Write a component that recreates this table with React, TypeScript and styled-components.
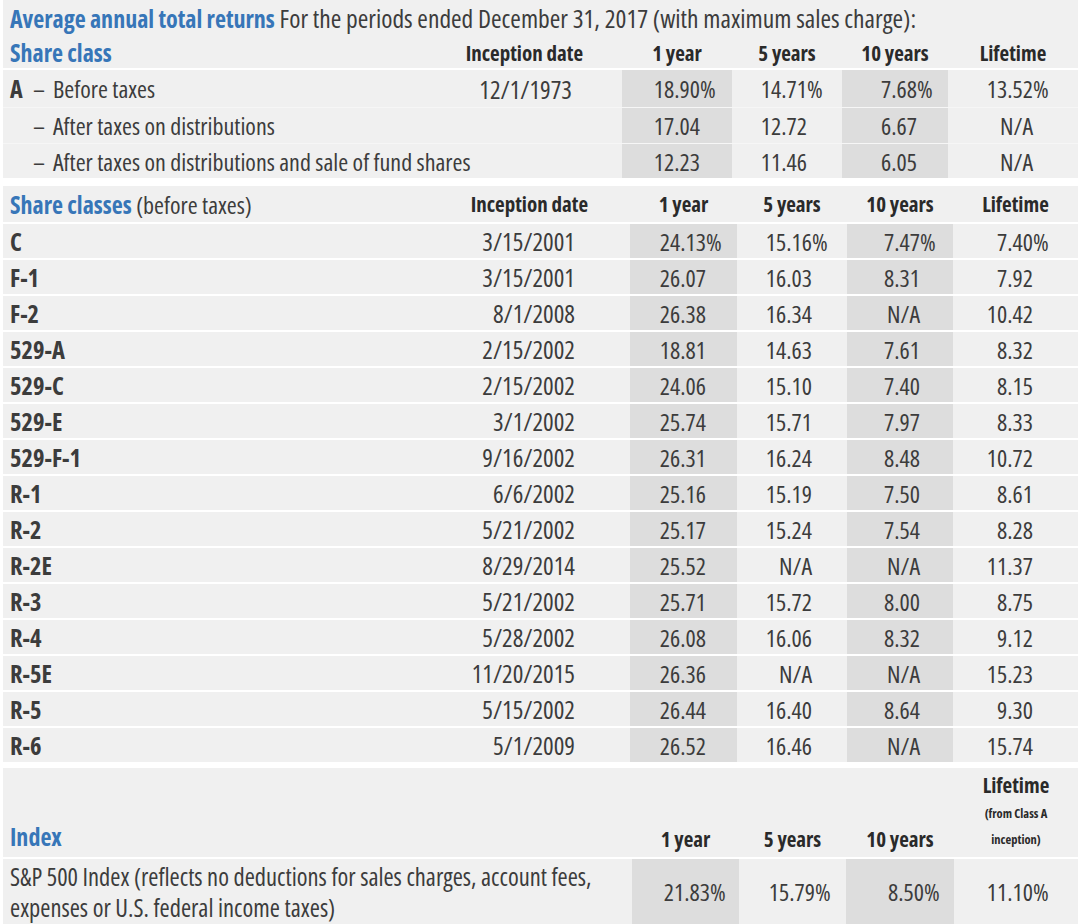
import React from 'react'
import styled, { createGlobalStyle } from 'styled-components'

const GlobalStyle = createGlobalStyle`
  *, *::before, *::after {
    box-sizing: border-box;
  }
  html, body {
    margin: 0;
    padding: 0;
    background: #ffffff;
  }
  body {
    font-family: "Open Sans", "DejaVu Sans Condensed", sans-serif;
    font-stretch: 80%;
    color: #3c3c3c;
  }
`

const BLUE = '#3776b8'

const Page = styled.div`
  width: 1075px;
  margin-left: 3px;
  display: flex;
  flex-direction: column;
`

const Section = styled.section<{ $gap?: number }>`
  background: #f0f0f0;
  display: flex;
  flex-direction: column;
  margin-bottom: ${(p) => p.$gap ?? 0}px;
`

const Title = styled.div`
  height: 36px;
  display: flex;
  align-items: center;
  padding-left: 7px;
  font-size: 25.5px;
  white-space: nowrap;
`

const Blue = styled.span<{ $size?: number }>`
  color: ${BLUE};
  font-weight: 700;
  font-size: ${(p) => (p.$size ? `${p.$size}px` : 'inherit')};
`

const Row = styled.div<{ $cols: string; $h: number; $line?: 'white' | 'soft' | 'none' }>`
  display: grid;
  grid-template-columns: ${(p) => p.$cols};
  height: ${(p) => p.$h}px;
  border-top: ${(p) =>
    p.$line === 'white' ? '2px solid #ffffff' : p.$line === 'soft' ? '1px solid #f6f6f6' : 'none'};
`

const LabelCell = styled.div<{ $bold?: boolean; $align?: 'center' | 'end' }>`
  display: flex;
  align-items: ${(p) => (p.$align === 'end' ? 'flex-end' : 'center')};
  padding-left: 7px;
  padding-bottom: ${(p) => (p.$align === 'end' ? '4px' : '0')};
  font-size: ${(p) => (p.$bold ? '24.5px' : '24px')};
  font-weight: ${(p) => (p.$bold ? 700 : 400)};
  white-space: nowrap;
`

const Letter = styled.span`
  flex-shrink: 0;
  width: 23px;
  font-weight: 700;
`

const Dash = styled.span`
  flex-shrink: 0;
  width: 20px;
`

const WrapLabel = styled.div`
  display: flex;
  align-items: center;
  padding-left: 7px;
  padding-right: 10px;
  font-size: 24.5px;
  line-height: 31px;
`

const HeadCell = styled.div<{ $pad?: number; $align?: 'center' | 'end' }>`
  display: flex;
  align-items: ${(p) => (p.$align === 'end' ? 'flex-end' : 'center')};
  justify-content: ${(p) => (p.$pad !== undefined ? 'flex-end' : 'center')};
  padding-right: ${(p) => p.$pad ?? 0}px;
  padding-bottom: ${(p) => (p.$align === 'end' ? '4px' : '0')};
  font-size: 21px;
  font-weight: 700;
  color: #2a2a2a;
  white-space: nowrap;
`

const StackHead = styled.div`
  display: flex;
  flex-direction: column;
  align-items: center;
  justify-content: flex-end;
  padding-bottom: 4px;
  font-weight: 700;
  color: #2a2a2a;
  line-height: 1.2;
`

const StackMain = styled.span`
  font-size: 21px;
  margin-bottom: 3px;
`

const StackSmall = styled.span`
  font-size: 12.5px;
  line-height: 26px;
`

const DateCell = styled.div<{ $pad: number }>`
  display: flex;
  align-items: center;
  justify-content: flex-end;
  padding-right: ${(p) => p.$pad}px;
  font-size: 25px;
`

const ValueCell = styled.div<{ $shade?: boolean; $pad: number }>`
  display: flex;
  align-items: center;
  justify-content: flex-end;
  padding-right: ${(p) => p.$pad}px;
  background: ${(p) => (p.$shade ? '#dddddd' : 'transparent')};
  font-size: 24px;
  white-space: nowrap;
`

const Pct = styled.span`
  display: inline-block;
  width: 0;
  overflow: visible;
`

type Cfg = { cols: string; pads: number[]; datePad: number; headPad: number }

const top: Cfg = {
  cols: '452px 167px 110px 110px 106px 1fr',
  pads: [32, 35, 31, 45],
  datePad: 50,
  headPad: 39,
}

const mid: Cfg = {
  cols: '455px 172px 107px 110px 106px 1fr',
  pads: [31, 35, 33, 45],
  datePad: 55,
  headPad: 42,
}

const bottomCols = '629px 107px 107px 108px 1fr'
const bottomPads = [29, 31, 30, 45]

const Value = ({ v, shade, pad }: { v: string; shade?: boolean; pad: number }) => {
  const pct = v.endsWith('%')
  return (
    <ValueCell $shade={shade} $pad={pad}>
      {pct ? v.slice(0, -1) : v}
      <Pct>{pct ? '%' : ''}</Pct>
    </ValueCell>
  )
}

const Values = ({ vals, pads }: { vals: string[]; pads: number[] }) => (
  <>
    {vals.map((v, i) => (
      <Value key={i} v={v} pad={pads[i]} shade={i === 0 || i === 2} />
    ))}
  </>
)

const YearHeads = () => (
  <>
    <HeadCell>1 year</HeadCell>
    <HeadCell>5 years</HeadCell>
    <HeadCell>10 years</HeadCell>
    <HeadCell>Lifetime</HeadCell>
  </>
)

const classA = [
  { letter: 'A', text: 'Before taxes', date: '12/1/1973', vals: ['18.90%', '14.71%', '7.68%', '13.52%'] },
  { letter: '', text: 'After taxes on distributions', date: '', vals: ['17.04', '12.72', '6.67', 'N/A'] },
  {
    letter: '',
    text: 'After taxes on distributions and sale of fund shares',
    date: '',
    vals: ['12.23', '11.46', '6.05', 'N/A'],
  },
]

const classes: [string, string, string[]][] = [
  ['C', '3/15/2001', ['24.13%', '15.16%', '7.47%', '7.40%']],
  ['F-1', '3/15/2001', ['26.07', '16.03', '8.31', '7.92']],
  ['F-2', '8/1/2008', ['26.38', '16.34', 'N/A', '10.42']],
  ['529-A', '2/15/2002', ['18.81', '14.63', '7.61', '8.32']],
  ['529-C', '2/15/2002', ['24.06', '15.10', '7.40', '8.15']],
  ['529-E', '3/1/2002', ['25.74', '15.71', '7.97', '8.33']],
  ['529-F-1', '9/16/2002', ['26.31', '16.24', '8.48', '10.72']],
  ['R-1', '6/6/2002', ['25.16', '15.19', '7.50', '8.61']],
  ['R-2', '5/21/2002', ['25.17', '15.24', '7.54', '8.28']],
  ['R-2E', '8/29/2014', ['25.52', 'N/A', 'N/A', '11.37']],
  ['R-3', '5/21/2002', ['25.71', '15.72', '8.00', '8.75']],
  ['R-4', '5/28/2002', ['26.08', '16.06', '8.32', '9.12']],
  ['R-5E', '11/20/2015', ['26.36', 'N/A', 'N/A', '15.23']],
  ['R-5', '5/15/2002', ['26.44', '16.40', '8.64', '9.30']],
  ['R-6', '5/1/2009', ['26.52', '16.46', 'N/A', '15.74']],
]

const App = () => {
  return (
    <>
      <GlobalStyle />
      <Page>
        <Section $gap={8}>
          <Title>
            <Blue $size={24}>Average annual total returns</Blue>&nbsp;For the periods ended December 31, 2017 (with
            maximum sales charge):
          </Title>
          <Row $cols={top.cols} $h={32}>
            <LabelCell>
              <Blue $size={24}>Share class</Blue>
            </LabelCell>
            <HeadCell $pad={top.headPad}>Inception date</HeadCell>
            <YearHeads />
          </Row>
          {classA.map((r, i) => (
            <Row key={i} $cols={top.cols} $h={i === 0 ? 39 : i === 1 ? 36 : 35} $line={i === 0 ? 'white' : 'soft'}>
              <LabelCell>
                <Letter>{r.letter}</Letter>
                <Dash>–</Dash>
                {r.text}
              </LabelCell>
              <DateCell $pad={top.datePad}>{r.date}</DateCell>
              <Values vals={r.vals} pads={top.pads} />
            </Row>
          ))}
        </Section>

        <Section $gap={6}>
          <Row $cols={mid.cols} $h={36}>
            <LabelCell>
              <Blue $size={24}>Share classes</Blue>&nbsp;(before taxes)
            </LabelCell>
            <HeadCell $pad={mid.headPad}>Inception date</HeadCell>
            <YearHeads />
          </Row>
          {classes.map(([name, date, vals]) => (
            <Row key={name} $cols={mid.cols} $h={36} $line="white">
              <LabelCell $bold>{name}</LabelCell>
              <DateCell $pad={mid.datePad}>{date}</DateCell>
              <Values vals={vals} pads={mid.pads} />
            </Row>
          ))}
        </Section>

        <Section>
          <Row $cols={bottomCols} $h={89}>
            <LabelCell $align="end">
              <Blue $size={24}>Index</Blue>
            </LabelCell>
            <HeadCell $align="end">1 year</HeadCell>
            <HeadCell $align="end">5 years</HeadCell>
            <HeadCell $align="end">10 years</HeadCell>
            <StackHead>
              <StackMain>Lifetime</StackMain>
              <StackSmall>(from Class A</StackSmall>
              <StackSmall>inception)</StackSmall>
            </StackHead>
          </Row>
          <Row $cols={bottomCols} $h={67} $line="white">
            <WrapLabel>
              S&amp;P 500 Index (reflects no deductions for sales charges, account fees, expenses or U.S. federal
              income taxes)
            </WrapLabel>
            <Values vals={['21.83%', '15.79%', '8.50%', '11.10%']} pads={bottomPads} />
          </Row>
        </Section>
      </Page>
    </>
  )
}

export default App
